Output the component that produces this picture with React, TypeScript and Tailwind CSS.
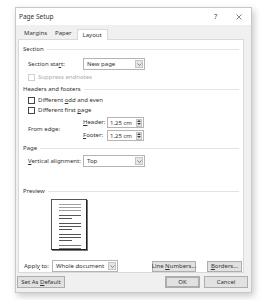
import React from 'react'

const font = { fontFamily: '"Noto Sans", "Open Sans", sans-serif' }

function U({ children }: { children: React.ReactNode }) {
  return <span className="underline underline-offset-[1px]">{children}</span>
}

function Chevron() {
  return (
    <svg width="5" height="3" viewBox="0 0 5 3" className="block">
      <path d="M0.5 0.5 L2.5 2.5 L4.5 0.5" fill="none" stroke="#555" strokeWidth="0.7" />
    </svg>
  )
}

function Select({ value, className }: { value: string; className: string }) {
  return (
    <div className={`flex items-center justify-between h-[12px] border border-[#b4b4b4] bg-white pl-[3px] pr-[1px] ${className}`}>
      <span className="leading-none">{value}</span>
      <div className="w-[8px] h-[8px] flex items-center justify-center bg-[#e6e6e6] border border-[#c4c4c4]">
        <Chevron />
      </div>
    </div>
  )
}

function Spin({ value }: { value: string }) {
  return (
    <div className="flex items-center justify-between w-[37px] h-[11px] border border-[#b4b4b4] bg-white pl-[2px] pr-[1px]">
      <span className="leading-none">{value}</span>
      <div className="w-[6px] h-[8px] flex flex-col items-center justify-center gap-[1px] bg-[#e6e6e6] border border-[#c4c4c4]">
        <svg width="4" height="2" viewBox="0 0 4 2"><path d="M0 2 L2 0 L4 2 Z" fill="#444" /></svg>
        <svg width="4" height="2" viewBox="0 0 4 2"><path d="M0 0 L2 2 L4 0 Z" fill="#444" /></svg>
      </div>
    </div>
  )
}

function Group({ title }: { title: string }) {
  return (
    <div className="flex items-center gap-[3px] pl-[4px] pr-[4px] h-[8px]">
      <span className="leading-none">{title}</span>
      <div className="flex-1 h-px bg-[#e3e3e3]" />
    </div>
  )
}

function Check({ label, disabled }: { label: React.ReactNode; disabled?: boolean }) {
  return (
    <div className={`flex items-center gap-[3px] pl-[9px] h-[8px] ${disabled ? 'text-[#aaaaaa]' : ''}`}>
      <div className={`w-[7px] h-[7px] border bg-white ${disabled ? 'border-[#d0d0d0]' : 'border-[#444]'}`} />
      <span className="leading-none">{label}</span>
    </div>
  )
}

function Btn({ children, className }: { children: React.ReactNode; className: string }) {
  return (
    <div className={`flex items-center justify-center h-[11px] bg-[#e1e1e1] border border-[#adadad] leading-none whitespace-nowrap ${className}`}>
      <span>{children}</span>
    </div>
  )
}

function PreviewPage() {
  const lines = [
    { w: 22, c: '#a0a0a0' },
    { w: 22, c: '#a0a0a0' },
    { w: 22, c: '#a0a0a0' },
    { w: 0, c: '' },
    { w: 22, c: '#555' },
    { w: 13, c: '#555' },
    { w: 0, c: '' },
    { w: 22, c: '#555' },
    { w: 22, c: '#555' },
    { w: 13, c: '#555' },
    { w: 0, c: '' },
    { w: 22, c: '#555' },
    { w: 22, c: '#555' },
    { w: 13, c: '#555' },
    { w: 0, c: '' },
    { w: 22, c: '#777' },
    { w: 22, c: '#777' },
  ]
  return (
    <div className="w-[36px] h-[51px] bg-white border border-[#555] border-r-[#222] border-b-[#222] shadow-[1px_1px_0_#777] flex flex-col gap-[2px] pt-[4px] pl-[7px]">
      {lines.map((l, i) =>
        l.w ? (
          <div key={i} className="h-px" style={{ width: l.w, background: l.c }} />
        ) : (
          <div key={i} className="h-px" />
        )
      )}
    </div>
  )
}

export default function App() {
  return (
    <div className="w-[269px] h-[300px] bg-white text-[6px] text-[#333] pt-[7px] pl-[15px]" style={font}>
      <div className="w-[237px] h-[286px] flex flex-col bg-[#f0f0f0] border border-[#c8c8c8] shadow-[2px_3px_7px_rgba(0,0,0,0.22)]">
        {/* title bar */}
        <div className="h-[17px] bg-white flex items-center pl-[3px] pr-[9px] text-[6.5px]">
          <span className="flex-1">Page Setup</span>
          <span className="mr-[19px]">?</span>
          <svg width="6" height="6" viewBox="0 0 6 6"><path d="M0.5 0.5 L5.5 5.5 M5.5 0.5 L0.5 5.5" stroke="#333" strokeWidth="0.6" /></svg>
        </div>

        {/* tabs */}
        <div className="flex items-end h-[14px] pl-[2px] pt-[3px]">
          <div className="pl-[6px] pr-[4px] h-[11px] flex items-center">Margins</div>
          <div className="pl-[4px] pr-[5px] h-[11px] flex items-center">Paper</div>
          <div className="px-[5px] h-[11px] flex items-center bg-white border border-b-0 border-[#d9d9d9] -mb-px relative z-10">Layout</div>
        </div>

        {/* panel */}
        <div className="ml-[2px] w-[226px] h-[234px] bg-white border border-[#d9d9d9] flex flex-col pt-[5px]">
          <Group title="Section" />
          <div className="flex items-center pl-[9px] mt-[5px]">
            <span className="w-[55px]">Section sta<U>r</U>t:</span>
            <Select value="New page" className="w-[62px]" />
          </div>
          <div className="mt-[3px]">
            <Check label="Suppress endnotes" disabled />
          </div>
          <div className="mt-[4px]"><Group title="Headers and footers" /></div>
          <div className="mt-[3px]"><Check label={<>Different <U>o</U>dd and even</>} /></div>
          <div className="mt-[2px]"><Check label={<>Different first <U>p</U>age</>} /></div>
          <div className="flex items-center pl-[9px] mt-[3px]">
            <span className="w-[55px]">From edge:</span>
            <div className="flex flex-col gap-[2px]">
              <div className="flex items-center">
                <span className="w-[24px]"><U>H</U>eader:</span>
                <Spin value="1.25 cm" />
              </div>
              <div className="flex items-center">
                <span className="w-[24px]"><U>F</U>ooter:</span>
                <Spin value="1.25 cm" />
              </div>
            </div>
          </div>
          <div className="mt-[3px]"><Group title="Page" /></div>
          <div className="flex items-center pl-[9px] mt-[3px]">
            <span className="w-[55px]"><U>V</U>ertical alignment:</span>
            <Select value="Top" className="w-[62px]" />
          </div>
          <div className="mt-[20px]"><Group title="Preview" /></div>
          <div className="pl-[32px] mt-[4px]">
            <PreviewPage />
          </div>
          <div className="flex items-center pl-[5px] pr-[1px] mt-[10px]">
            <span className="w-[28px]">Appl<U>y</U> to:</span>
            <Select value="Whole document" className="w-[66px]" />
            <div className="flex-1" />
            <Btn className="w-[44px]">Line <U>N</U>umbers...</Btn>
            <Btn className="w-[35px] ml-[11px]"><U>B</U>orders...</Btn>
          </div>
        </div>

        {/* bottom buttons */}
        <div className="flex items-center pl-[1px] mt-[3px]">
          <Btn className="w-[48px] h-[12px]">Set As <U>D</U>efault</Btn>
          <div className="flex-1" />
          <Btn className="w-[35px] h-[12px] border-[#0078d7] border-2">OK</Btn>
          <Btn className="w-[44px] h-[12px] ml-[4px] mr-[3px]">Cancel</Btn>
        </div>
      </div>
    </div>
  )
}
